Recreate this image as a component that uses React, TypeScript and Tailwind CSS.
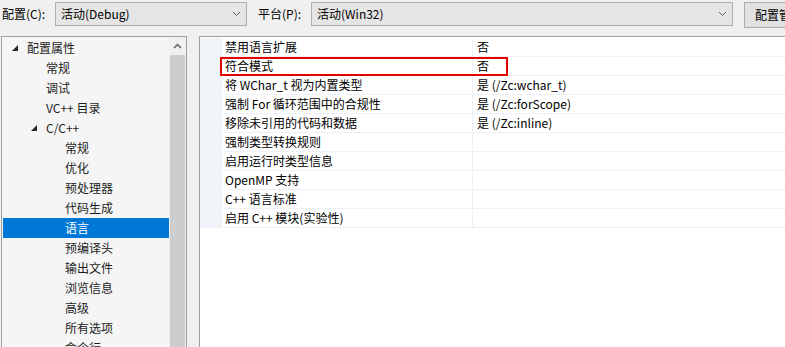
import React from "react";

type TreeItem = { label: string; level: 0 | 1 | 2; expanded?: boolean; selected?: boolean };

const treeItems: TreeItem[] = [
  { label: "配置属性", level: 0, expanded: true },
  { label: "常规", level: 1 },
  { label: "调试", level: 1 },
  { label: "VC++ 目录", level: 1 },
  { label: "C/C++", level: 1, expanded: true },
  { label: "常规", level: 2 },
  { label: "优化", level: 2 },
  { label: "预处理器", level: 2 },
  { label: "代码生成", level: 2 },
  { label: "语言", level: 2, selected: true },
  { label: "预编译头", level: 2 },
  { label: "输出文件", level: 2 },
  { label: "浏览信息", level: 2 },
  { label: "高级", level: 2 },
  { label: "所有选项", level: 2 },
  { label: "命令行", level: 2 },
];

const indent: Record<number, string> = {
  0: "pl-[9px]",
  1: "pl-[28px]",
  2: "pl-[47px]",
};

const props: [string, string][] = [
  ["禁用语言扩展", "否"],
  ["符合模式", "否"],
  ["将 WChar_t 视为内置类型", "是 (/Zc:wchar_t)"],
  ["强制 For 循环范围中的合规性", "是 (/Zc:forScope)"],
  ["移除未引用的代码和数据", "是 (/Zc:inline)"],
  ["强制类型转换规则", ""],
  ["启用运行时类型信息", ""],
  ["OpenMP 支持", ""],
  ["C++ 语言标准", ""],
  ["启用 C++ 模块(实验性)", ""],
];

const Chevron = () => (
  <svg width="9" height="6" viewBox="0 0 9 6" className="shrink-0">
    <polyline points="1,1 4.5,4.5 8,1" fill="none" stroke="#606060" strokeWidth="1" />
  </svg>
);

const Combo: React.FC<{ text: string; width: string }> = ({ text, width }) => (
  <div
    className={`${width} h-[24px] shrink-0 border border-[#adadad] bg-[#e5e5e5] flex items-center pl-[5px] pr-[5px]`}
  >
    <span className="flex-1 whitespace-nowrap">{text}</span>
    <Chevron />
  </div>
);

const Expander = () => (
  <svg width="6" height="6" viewBox="0 0 6 6">
    <path d="M6 0 L6 6 L0 6 Z" fill="#262626" />
  </svg>
);

export default function App() {
  return (
    <div className="h-[347px] w-[785px] overflow-hidden bg-[#f0f0f0] text-[12px] text-black flex flex-col font-['Microsoft_YaHei_UI','Noto_Sans_CJK_SC','Noto_Sans',sans-serif]">
      {/* toolbar */}
      <div className="h-[36px] shrink-0 flex items-start pt-[2px] pl-[2px]">
        <div className="w-[53px] shrink-0 h-[24px] leading-[24px] whitespace-nowrap">配置(C):</div>
        <Combo text="活动(Debug)" width="w-[192px]" />
        <div className="ml-[11px] w-[53px] shrink-0 h-[24px] leading-[24px] whitespace-nowrap">平台(P):</div>
        <Combo text="活动(Win32)" width="w-[422px]" />
        <div className="ml-[11px] w-[90px] h-[26px] shrink-0 border border-[#adadad] bg-[#e1e1e1] pl-[10px] leading-[24px] whitespace-nowrap">
          配置管理器(O)...
        </div>
      </div>

      <div className="flex flex-1 min-h-0">
        {/* tree */}
        <div className="ml-[1px] w-[186px] shrink-0 border border-b-0 border-[#a0a0a0] bg-[#f5f5f5] flex">
          <div className="flex-1 pt-[1px] pl-[1px] overflow-hidden">
            {treeItems.map((item, i) => (
              <div
                key={i}
                className={`h-[20px] flex items-center whitespace-nowrap ${indent[item.level]} ${
                  item.selected ? "bg-[#0078d7] text-white" : "text-[#1e1e1e]"
                }`}
              >
                <div className="w-[15px] shrink-0 flex items-center">
                  {item.expanded ? <Expander /> : null}
                </div>
                <span>{item.label}</span>
              </div>
            ))}
          </div>
          <div className="w-[17px] shrink-0 bg-[#f0f0f0] flex flex-col">
            <div className="h-[18px] flex items-center justify-center">
              <svg width="9" height="6" viewBox="0 0 9 6">
                <polyline points="1,5 4.5,1.5 8,5" fill="none" stroke="#606060" strokeWidth="1.5" />
              </svg>
            </div>
            <div className="flex-1 ml-[1px] mr-[1px] bg-[#cdcdcd]" />
          </div>
        </div>

        {/* property grid */}
        <div className="ml-[12px] flex-1 border-l border-t border-[#a0a0a0] bg-white relative pt-[1px]">
          {props.map(([name, value], i) => (
            <div key={i} className="h-[19px] flex">
              <div className="w-[22px] shrink-0 bg-[#f0f4f9]" />
              <div className="flex-1 flex border-b border-[#edf0f4]">
                <div className="w-[251px] shrink-0 pl-[3px] border-r border-[#edf0f4] leading-[18px] whitespace-nowrap">
                  {name}
                </div>
                <div className="flex-1 pl-[4px] leading-[18px] whitespace-nowrap">{value}</div>
              </div>
            </div>
          ))}
          {/* annotation box */}
          <div className="absolute left-[20px] top-[20px] w-[288px] h-[19px] border-2 border-[#e50000]" />
        </div>
      </div>
    </div>
  );
}
